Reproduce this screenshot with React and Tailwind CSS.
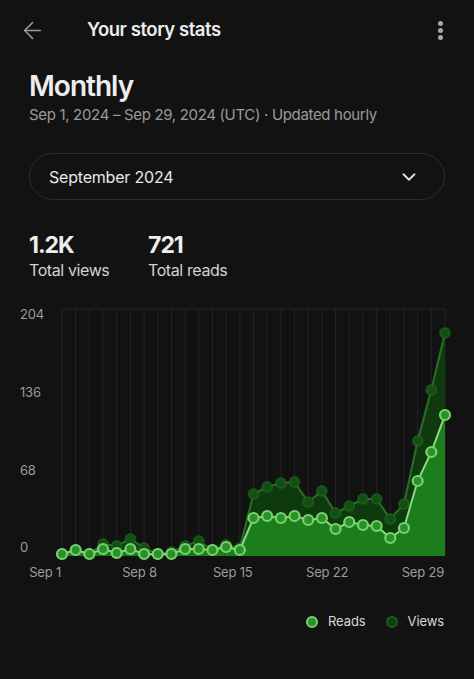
import { ChevronDown, ArrowLeft } from 'lucide-react';

// pixel positions read off the reference, one per day (Sep 1 … Sep 29)
const readsY = [554, 550, 554, 549, 553, 549, 554, 554, 554, 549, 549, 550, 547, 550, 518, 516, 518, 516, 520, 518, 529, 522, 525, 526, 538, 528, 481, 452, 415];
const viewsY = [554, 550, 554, 544, 546, 539, 548, 554, 552, 546, 541, 550, 545, 548, 494, 487, 483, 482, 502, 491, 513, 506, 499, 499, 519, 504, 441, 390, 333];

const X0 = 62;
const STEP = (445 - 62) / 28;
const BASE = 556;
const xs = readsY.map((_, i) => X0 + i * STEP);

const line = (ys) => ys.map((y, i) => `${i ? 'L' : 'M'}${xs[i].toFixed(1)} ${y}`).join(' ');
const area = (ys) => `${line(ys)} L${xs[xs.length - 1].toFixed(1)} ${BASE} L${X0} ${BASE} Z`;

function Chart() {
  const yLabels = [
    { t: '204', y: 315 },
    { t: '136', y: 393 },
    { t: '68', y: 471 },
    { t: '0', y: 548 },
  ];
  const xLabels = [
    { t: 'Sep 1', i: 0 },
    { t: 'Sep 8', i: 7 },
    { t: 'Sep 15', i: 14 },
    { t: 'Sep 22', i: 21 },
    { t: 'Sep 29', i: 28 },
  ];
  return (
    <svg width="474" height="290" viewBox="0 300 474 290" className="block" style={{ fontFamily: 'Inter, sans-serif', letterSpacing: '-0.2px' }}>
      {xs.map((x, i) => (
        <line key={i} x1={x} x2={x} y1={309} y2={BASE} stroke="#242424" strokeWidth="1" />
      ))}
      <line x1={X0} x2={445} y1={309} y2={309} stroke="#242424" strokeWidth="1" />
      {yLabels.map((l) => (
        <text key={l.t} x={20} y={l.y} dominantBaseline="middle" fontSize="13" fill="#9b9b9b">{l.t}</text>
      ))}
      {xLabels.map((l) => (
        <text key={l.t} x={xs[l.i] - 1} y={573} dominantBaseline="middle" textAnchor="end" fontSize="13" fill="#9b9b9b">{l.t}</text>
      ))}

      <path d={area(viewsY)} fill="#0f3a0f" />
      <path d={line(viewsY)} fill="none" stroke="#2a6e27" strokeWidth="2" />
      {viewsY.map((y, i) => (
        <circle key={i} cx={xs[i]} cy={y} r="5" fill="#134f13" stroke="#23702080" strokeWidth="2" />
      ))}

      <path d={area(readsY)} fill="#1c7d1c" />
      <path d={line(readsY)} fill="none" stroke="#8ad882" strokeWidth="2" />
      {readsY.map((y, i) => (
        <circle key={i} cx={xs[i]} cy={y} r="5" fill="#2b8f2b" stroke="#76d36a" strokeWidth="2.2" />
      ))}
    </svg>
  );
}

export default function App() {
  return (
    <div className="w-[474px] h-[679px] bg-[#121212] text-white overflow-hidden" style={{ fontFamily: 'Inter, "Noto Sans", sans-serif' }}>
      {/* header */}
      <div className="h-[60px] flex items-center pl-[20px] pr-[31px]">
        <ArrowLeft size={27} strokeWidth={1.3} className="text-[#9a9a9a] -ml-[1px]" />
        <div className="ml-[41px] text-[18.5px] font-semibold text-[#ececec] flex-1 -mt-[1px] tracking-[-0.45px]">Your story stats</div>
        <div className="flex flex-col gap-[2px] items-center">
          <span className="w-[5px] h-[5px] rounded-full bg-[#a8a8a8]" />
          <span className="w-[5px] h-[5px] rounded-full bg-[#a8a8a8]" />
          <span className="w-[5px] h-[5px] rounded-full bg-[#a8a8a8]" />
        </div>
      </div>

      <div className="px-[29px]">
        <div className="mt-[9px] text-[28px] leading-[34px] font-semibold text-[#ededed] tracking-[-1px]">Monthly</div>
        <div className="mt-[2px] text-[15px] leading-[20px] text-[#9a9a9a] tracking-[-0.33px]">Sep 1, 2024 – Sep 29, 2024 (UTC) · Updated hourly</div>

        <button className="mt-[28px] w-full h-[47px] rounded-full border border-[#2c2c2c] flex items-center justify-between pl-[19px] pr-[24px]">
          <span className="text-[16px] text-[#e8e8e8] tracking-[-0.2px]">September 2024</span>
          <ChevronDown size={22} strokeWidth={2} className="text-[#e0e0e0]" />
        </button>

        <div className="mt-[31px] flex gap-[39px] whitespace-nowrap">
          <div className="w-[80px]">
            <div className="text-[23px] leading-[28px] font-bold text-[#ededed] tracking-[-1px]">1.2K</div>
            <div className="text-[16px] leading-[22px] text-[#d2d2d2] tracking-[-0.4px]">Total views</div>
          </div>
          <div>
            <div className="text-[23px] leading-[28px] font-bold text-[#ededed] tracking-[-1px]">721</div>
            <div className="text-[16px] leading-[22px] text-[#d2d2d2] tracking-[-0.4px]">Total reads</div>
          </div>
        </div>
      </div>

      <div className="mt-[19px]">
        <Chart />
      </div>

      <div className="mt-[22px] flex justify-end items-center pr-[30px] text-[13px] text-[#d8d8d8] tracking-[-0.1px]">
        <span className="w-[12px] h-[12px] rounded-full bg-[#2b8f2b] border-[2px] border-[#76d36a]" />
        <span className="ml-[10px]">Reads</span>
        <span className="ml-[20px] w-[12px] h-[12px] rounded-full bg-[#0f3f0f] border-[2px] border-[#1d5a1c]" />
        <span className="ml-[10px]">Views</span>
      </div>
    </div>
  );
}
